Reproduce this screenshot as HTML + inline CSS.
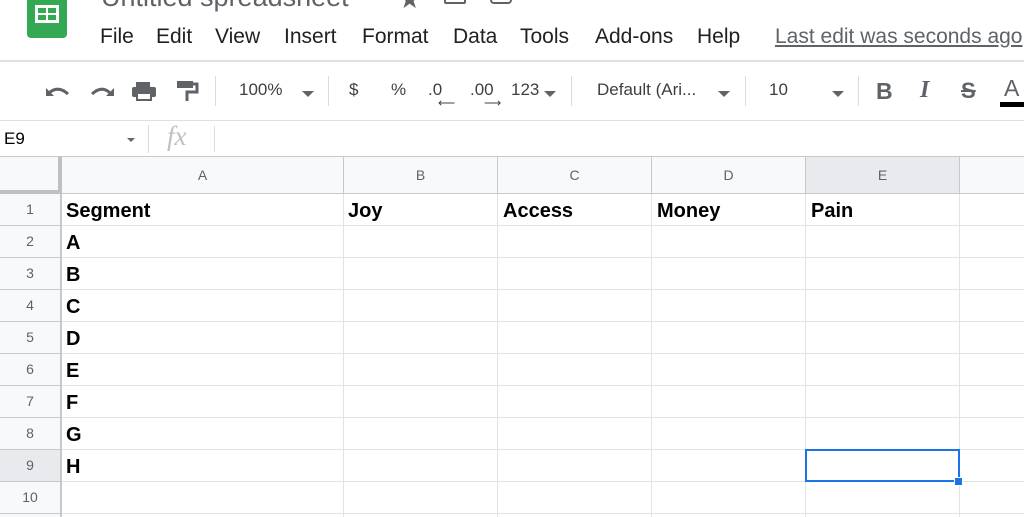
<!DOCTYPE html>
<html><head><meta charset="utf-8"><style>
*{margin:0;padding:0;box-sizing:border-box}
html,body{width:1024px;height:517px;overflow:hidden}
body{background:#fff;font-family:"Liberation Sans",Arial,sans-serif;position:relative}
.a{position:absolute;white-space:nowrap}
.menu{top:25px;font-size:21px;color:#202124}
.tb{top:80px;font-size:17px;color:#3c4043}
.vs{position:absolute;width:1px;background:#dadce0}
.ch{position:absolute;top:157px;height:37px;background:#f8f9fa;border-right:1px solid #c8c8c8;border-bottom:1px solid #c8c8c8;font-size:14px;color:#5f6368;text-align:center;line-height:36px}
.rh{position:absolute;left:0;width:62px;height:32px;background:#f8f9fa;border-right:2px solid #c8c8c8;border-bottom:1px solid #c8c8c8;font-size:14px;color:#5f6368;text-align:center;line-height:31px}
.hl{position:absolute;left:62px;right:0;height:1px;background:#e2e3e3}
.vl{position:absolute;top:194px;height:323px;width:1px;background:#e2e3e3}
.c{position:absolute;font-size:20px;font-weight:bold;color:#000;line-height:32px;margin-top:1px}
.arr{display:inline-block;width:0;height:0;border-left:6px solid transparent;border-right:6px solid transparent;border-top:6px solid #5f6368;vertical-align:middle}
</style></head><body>
<div class="a" style="left:27px;top:-4px;width:40px;height:42px;background:#34a853;border-radius:4px"></div>
<div class="a" style="left:35px;top:5px;width:24px;height:18px;background:#fff"></div>
<div class="a" style="left:38px;top:8px;width:8px;height:5px;background:#34a853"></div>
<div class="a" style="left:48px;top:8px;width:8px;height:5px;background:#34a853"></div>
<div class="a" style="left:38px;top:15px;width:8px;height:5px;background:#34a853"></div>
<div class="a" style="left:48px;top:15px;width:8px;height:5px;background:#34a853"></div>
<div class="a" style="left:101px;top:-18px;font-size:27px;color:#5f6368">Untitled spreadsheet</div>
<div class="a" style="left:398px;top:-16px;font-size:26px;color:#5f6368">★</div>
<div class="a" style="left:444px;top:-8px;width:22px;height:12px;border:2px solid #5f6368;border-radius:2px"></div>
<div class="a" style="left:490px;top:-8px;width:22px;height:12px;border:2px solid #5f6368;border-radius:4px"></div>
<div class="a menu" style="left:100px">File</div>
<div class="a menu" style="left:156px">Edit</div>
<div class="a menu" style="left:215px">View</div>
<div class="a menu" style="left:284px">Insert</div>
<div class="a menu" style="left:362px">Format</div>
<div class="a menu" style="left:453px">Data</div>
<div class="a menu" style="left:520px">Tools</div>
<div class="a menu" style="left:595px">Add-ons</div>
<div class="a menu" style="left:697px">Help</div>
<div class="a menu" style="left:775px;color:#5f6368;text-decoration:underline">Last edit was seconds ago</div>
<div class="a" style="left:0;top:60px;width:1024px;height:2px;background:#e0e0e0"></div>
<svg class="a" style="left:44px;top:80px" width="130" height="24" viewBox="0 0 130 24">
<path d="M5 13 Q14 5 24 14" stroke="#5f6368" stroke-width="3" fill="none"/><path d="M2 8 L2 16 L10 16 Z" fill="#5f6368"/>
<path d="M48 14 Q58 5 66 13" stroke="#5f6368" stroke-width="3" fill="none"/><path d="M70 8 L70 16 L62 16 Z" fill="#5f6368"/>
<rect x="92" y="2" width="14" height="5" fill="#5f6368"/><rect x="88" y="7" width="24" height="10" rx="2" fill="#5f6368"/><rect x="93" y="13" width="14" height="7" fill="#fff" stroke="#5f6368" stroke-width="2"/>
</svg>
<svg class="a" style="left:177px;top:79px" width="24" height="24"><rect x="0" y="2" width="16" height="7" fill="#5f6368"/><path d="M16 5 H20 V13 H10 V22" stroke="#5f6368" stroke-width="3" fill="none"/></svg>
<div class="vs" style="left:215px;top:76px;height:30px"></div>
<div class="a tb" style="left:239px">100%</div>
<div class="a" style="left:302px;top:85px"><span class="arr"></span></div>
<div class="vs" style="left:328px;top:76px;height:30px"></div>
<div class="a tb" style="left:349px">$</div>
<div class="a tb" style="left:391px">%</div>
<div class="a tb" style="left:428px">.0</div>
<div class="a" style="left:438px;top:96px;font-size:12px;color:#3c4043">⟵</div>
<div class="a tb" style="left:470px">.00</div>
<div class="a" style="left:484px;top:96px;font-size:12px;color:#3c4043">⟶</div>
<div class="a tb" style="left:511px">123</div>
<div class="a" style="left:544px;top:85px"><span class="arr"></span></div>
<div class="vs" style="left:571px;top:76px;height:30px"></div>
<div class="a tb" style="left:597px">Default (Ari...</div>
<div class="a" style="left:718px;top:85px"><span class="arr"></span></div>
<div class="vs" style="left:745px;top:76px;height:30px"></div>
<div class="a tb" style="left:769px">10</div>
<div class="a" style="left:832px;top:85px"><span class="arr"></span></div>
<div class="vs" style="left:858px;top:76px;height:30px"></div>
<div class="a" style="left:876px;top:78px;font-size:23px;font-weight:bold;color:#5f6368">B</div>
<div class="a" style="left:920px;top:77px;font-size:24px;font-weight:bold;font-style:italic;color:#5f6368;font-family:'Liberation Serif',serif">I</div>
<div class="a" style="left:961px;top:78px;font-size:22px;font-weight:bold;color:#5f6368;text-decoration:line-through">S</div>
<div class="a" style="left:1004px;top:75px;font-size:23px;color:#5f6368">A</div>
<div class="a" style="left:1000px;top:102px;width:24px;height:5px;background:#000"></div>
<div class="a" style="left:0;top:120px;width:1024px;height:1px;background:#e0e0e0"></div>
<div class="a" style="left:4px;top:129px;font-size:17px;color:#000">E9</div>
<div class="a" style="left:127px;top:138px;border-left:4px solid transparent;border-right:4px solid transparent;border-top:4px solid #666"></div>
<div class="vs" style="left:148px;top:125px;height:28px"></div>
<div class="a" style="left:167px;top:121px;font-size:27px;font-style:italic;color:#c0c0c0;font-family:'Liberation Serif',serif">fx</div>
<div class="vs" style="left:214px;top:126px;height:26px"></div>
<div class="a" style="left:0;top:156px;width:1024px;height:1px;background:#c8c8c8"></div>
<div class="ch" style="left:0;width:62px;border-right:4px solid #c0c0c0;border-bottom:4px solid #c0c0c0"></div>
<div class="ch" style="left:62px;width:282px">A</div>
<div class="ch" style="left:344px;width:154px">B</div>
<div class="ch" style="left:498px;width:154px">C</div>
<div class="ch" style="left:652px;width:154px">D</div>
<div class="ch" style="left:806px;width:154px;background:#e8eaed">E</div>
<div class="ch" style="left:960px;width:64px;border-right:none"></div>
<div class="rh" style="top:194px">1</div><div class="rh" style="top:226px">2</div><div class="rh" style="top:258px">3</div><div class="rh" style="top:290px">4</div><div class="rh" style="top:322px">5</div><div class="rh" style="top:354px">6</div><div class="rh" style="top:386px">7</div><div class="rh" style="top:418px">8</div><div class="rh" style="top:450px;background:#e8eaed">9</div><div class="rh" style="top:482px">10</div><div class="rh" style="top:514px;height:3px;border-bottom:none"></div>
<div class="hl" style="top:225px"></div><div class="hl" style="top:257px"></div><div class="hl" style="top:289px"></div><div class="hl" style="top:321px"></div><div class="hl" style="top:353px"></div><div class="hl" style="top:385px"></div><div class="hl" style="top:417px"></div><div class="hl" style="top:449px"></div><div class="hl" style="top:481px"></div><div class="hl" style="top:513px"></div>
<div class="vl" style="left:343px"></div><div class="vl" style="left:497px"></div><div class="vl" style="left:651px"></div><div class="vl" style="left:805px"></div><div class="vl" style="left:959px"></div>
<div class="c" style="left:66px;top:194px">Segment</div>
<div class="c" style="left:348px;top:194px">Joy</div>
<div class="c" style="left:503px;top:194px">Access</div>
<div class="c" style="left:657px;top:194px">Money</div>
<div class="c" style="left:811px;top:194px">Pain</div>
<div class="c" style="left:66px;top:226px">A</div>
<div class="c" style="left:66px;top:258px">B</div>
<div class="c" style="left:66px;top:290px">C</div>
<div class="c" style="left:66px;top:322px">D</div>
<div class="c" style="left:66px;top:354px">E</div>
<div class="c" style="left:66px;top:386px">F</div>
<div class="c" style="left:66px;top:418px">G</div>
<div class="c" style="left:66px;top:450px">H</div>
<div class="a" style="left:805px;top:449px;width:155px;height:33px;border:2px solid #1a73e8"></div>
<div class="a" style="left:954px;top:477px;width:9px;height:9px;background:#1a73e8;border:1px solid #fff"></div>
</body></html>
